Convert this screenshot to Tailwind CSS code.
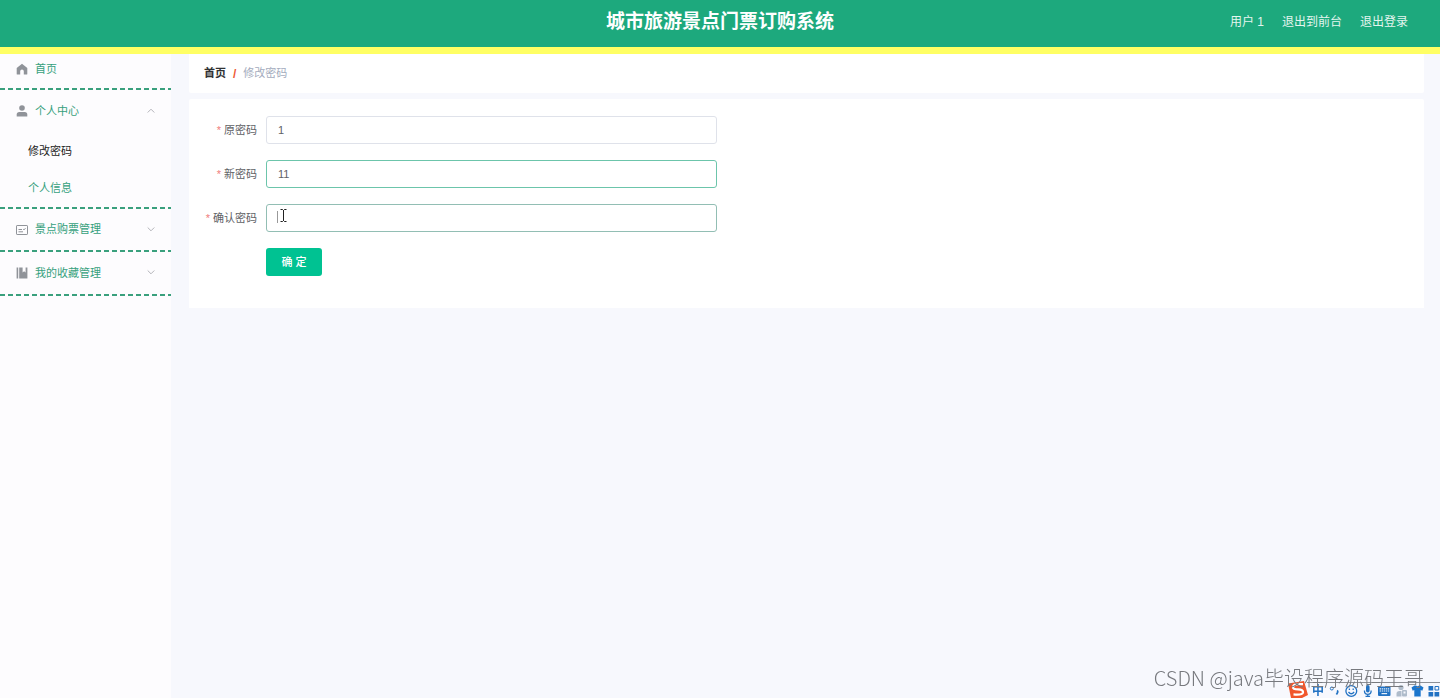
<!DOCTYPE html>
<html lang="zh-CN">

<head>
    <meta charset="UTF-8">
    <meta name="viewport" content="width=device-width, initial-scale=1.0">
    <script src="https://cdn.jsdelivr.net/npm/@tailwindcss/browser@4"></script>
    <title>城市旅游景点门票订购系统</title>
</head>

<body class="min-h-screen flex flex-col bg-[#f7f8fd] text-[11px] text-[#606266] font-['Liberation_Sans','Noto_Sans_CJK_SC',sans-serif]">
    <!-- Header -->
    <header class="grid grid-cols-[1fr_auto_1fr] items-center h-[54px] pb-1 px-8 bg-[#1da97d] border-b-[7px] border-[#ffff64]">
        <h1 class="col-start-2 text-[19px] leading-6 font-bold text-white">城市旅游景点门票订购系统</h1>
        <nav class="flex justify-end gap-[18px] text-[12px] text-[#e4f5ef]">
            <span>用户 1</span>
            <a href="#">退出到前台</a>
            <a href="#">退出登录</a>
        </nav>
    </header>

    <div class="flex flex-1">
        <!-- Sidebar -->
        <aside class="w-[171px] shrink-0 bg-[#fdfcfe] text-[#35a07c]">
            <a href="#" class="flex items-center h-[34px] pb-1 pl-4">
                <svg class="w-3 h-3 mr-[7px]" viewBox="0 0 12 12" fill="#909399">
                    <path d="M6 .8 11.3 5v6a.6.6 0 0 1-.6.6H7.800V8.200a1.800 1.800 0 0 0-3.600 0v3.400H1.300a.6.6 0 0 1-.6-.6V5z" />
                </svg>
                首页
            </a>
            <div class="h-[2px] bg-[repeating-linear-gradient(90deg,#3aa07d_0_5px,transparent_5px_8px)]"></div>

            <button type="button" aria-expanded="true" class="flex items-center w-full h-[42px] px-4">
                <svg class="w-3 h-3 mr-[7px]" viewBox="0 0 12 12" fill="#909399">
                    <circle cx="6" cy="3" r="2.800" />
                    <path d="M.7 11.500V9.600Q.7 7 3.300 7h5.400q2.600 0 2.600 2.600v1.900z" />
                </svg>
                个人中心
                <svg class="w-2 h-2 ml-auto" viewBox="0 0 8 8" fill="none" stroke="#b4b4ba" stroke-width="1">
                    <path d="M.7 5.500 4 2.200l3.300 3.300" />
                </svg>
            </button>
            <a href="#" class="flex items-center h-[38px] pl-7 text-[#1c1c1c]">修改密码</a>
            <a href="#" class="flex items-center h-[37px] pl-7">个人信息</a>
            <div class="h-[2px] bg-[repeating-linear-gradient(90deg,#3aa07d_0_5px,transparent_5px_8px)]"></div>

            <button type="button" aria-expanded="false" class="flex items-center w-full h-[41px] px-4">
                <svg class="w-3 h-3 mr-[7px]" viewBox="0 0 12 12" fill="none" stroke="#909399" stroke-width="1">
                    <rect x=".5" y="1.500" width="11" height="9" rx=".6" />
                    <path d="M2.500 5.500h3.500M2.500 7.800h4.500M7.200 5.200l.8.700 1.500-1.700" />
                </svg>
                景点购票管理
                <svg class="w-2 h-2 ml-auto" viewBox="0 0 8 8" fill="none" stroke="#b4b4ba" stroke-width="1">
                    <path d="M.7 1.500 4 4.800l3.300-3.300" />
                </svg>
            </button>
            <div class="h-[2px] bg-[repeating-linear-gradient(90deg,#3aa07d_0_5px,transparent_5px_8px)]"></div>

            <button type="button" aria-expanded="false" class="flex items-center w-full h-[42px] px-4">
                <svg class="w-3 h-3 mr-[7px]" viewBox="0 0 12 12" fill="#909399">
                    <path d="M.6.6h1.600v10.800H.6zM3.200.6h3.400v5l1.500-1.300 1.500 1.300v-5h1.800v10.800H3.200z" />
                </svg>
                我的收藏管理
                <svg class="w-2 h-2 ml-auto" viewBox="0 0 8 8" fill="none" stroke="#b4b4ba" stroke-width="1">
                    <path d="M.7 1.500 4 4.800l3.300-3.300" />
                </svg>
            </button>
            <div class="h-[2px] bg-[repeating-linear-gradient(90deg,#3aa07d_0_5px,transparent_5px_8px)]"></div>
        </aside>

        <!-- Content -->
        <main class="flex-1 ml-[18px] mr-4">
            <nav class="flex items-center h-[39px] px-[15px] bg-white rounded-b-xs">
                <a href="#" class="font-bold text-[#303133]">首页</a>
                <span class="mx-[7px] font-bold text-[12px] text-[#ee5a36]">/</span>
                <span class="text-[#a3abbd]">修改密码</span>
            </nav>

            <form class="flex flex-col gap-4 mt-[6px] pt-[17px] pb-8 bg-white rounded-t-xs">
                <div class="flex items-center">
                    <label for="oldPassword" class="w-[77px] pr-[9px] text-right"><span class="text-[#f07c7c]">*</span> 原密码</label>
                    <input type="text" id="oldPassword" value="1"
                        class="w-[451px] h-7 px-[11px] rounded-[3px] border border-[#dfe2ea] bg-white outline-none">
                </div>
                <div class="flex items-center">
                    <label for="newPassword" class="w-[77px] pr-[9px] text-right"><span class="text-[#f07c7c]">*</span> 新密码</label>
                    <input type="text" id="newPassword" value="11"
                        class="w-[451px] h-7 px-[11px] rounded-[3px] border border-[#6cc5ab] bg-white outline-none">
                </div>
                <div class="flex items-center">
                    <label for="confirmPassword" class="w-[77px] pr-[9px] text-right"><span class="text-[#f07c7c]">*</span> 确认密码</label>
                    <div class="relative">
                        <input type="text" id="confirmPassword"
                            class="block w-[451px] h-7 px-[11px] rounded-[3px] border border-[#92beb4] bg-white outline-none">
                        <!-- caret and pointer -->
                        <span class="absolute left-[11px] top-[7px] w-px h-3 bg-[#999]"></span>
                        <svg class="absolute left-[14px] top-[5px] w-[7px] h-[13px]" viewBox="0 0 7 13" fill="none" stroke="#222" stroke-width="1">
                            <path d="M.5.5h2.300M4.200.5h2.300M3.500 1v11M.5 12.500h2.300M4.200 12.500h2.300" />
                        </svg>
                    </div>
                </div>
                <button type="button" class="w-14 h-7 ml-[77px] rounded-[3px] bg-[#00c292] text-white font-medium">确 定</button>
            </form>
        </main>
    </div>

    <!-- Input method bar -->
    <div class="fixed right-0 bottom-0 w-[153px] h-[18px]">
        <div class="absolute left-5 right-0 top-[2px] h-px bg-[#8d9096]"></div>
        <svg class="absolute left-0 top-0 w-[153px] h-[18px]" viewBox="0 0 153 18" fill="none">
            <path d="M1 3.500 17 1l4 14-6 3H4z" fill="#f1562b" />
            <path d="M16 4.200Q6 3.500 6 7.200q0 2.200 5 2.200 5.500.2 5 3-.6 2.800-9.500 2" stroke="#fff" stroke-width="2.200" />
            <g stroke="#2272c3" stroke-width="1.300">
                <circle cx="44.800" cy="8.500" r="1.500" stroke-width="1" />
                <path d="M50 10.500q1.800.8-.6 4" stroke-width="1.800" />
                <circle cx="64.300" cy="11" r="5.400" />
                <path d="M61.500 12q2.800 3.500 5.600 0" />
                <path d="M62.400 8.500v1.500M66.200 8.500v1.500" />
                <path d="M77.500 10.500v.8q0 3 3.300 3t3.300-3v-.8M80.800 14v2.500M78.500 16.400h4.600" />
            </g>
            <rect x="79" y="5" width="3.600" height="7.500" rx="1.800" fill="#2272c3" />
            <rect x="91" y="6.500" width="12.500" height="9.500" rx="1" fill="#2272c3" />
            <path d="M92.600 8.800h9.600M92.600 11h9.600" stroke="#e6effa" stroke-width="1.200" stroke-dasharray="1.400 .7" />
            <path d="M94.500 13.600h5.600" stroke="#e6effa" stroke-width="1.200" />
            <g fill="#afbccb">
                <circle cx="114" cy="7.500" r="2.600" />
                <path d="M109.500 16.500v-3q0-2.500 3-2.500h2v5.500z" />
                <rect x="115" y="10" width="5" height="6.500" rx="1" />
                <path d="M116.500 11.500h2v2h-2z" fill="#f7f8fd" />
            </g>
            <path d="m127.500 5.500-3 2 1.200 3.200 1.600-.6v6.400h6.400v-6.400l1.600.6 1.200-3.200-3-2h-1.500q-1.500 1.500-3 0z" fill="#1c76cd" />
            <path d="M141.500 6h4.700v4.500h-4.700zM141.500 12h4.700v4.500h-4.700zM147.500 12h4.700v4.500h-4.700z" fill="#2272c3" />
            <path d="M148 6.500h3.700v3.500H148z" stroke="#2272c3" />
        </svg>
        <span class="absolute left-[25px] top-1 text-[12px] leading-[14px] font-bold text-[#2272c3]">中</span>
    </div>

    <!-- Watermark -->
    <p class="fixed right-4 bottom-2 text-[20px] leading-6 whitespace-nowrap font-light text-[#77797e] font-['Noto_Sans_CJK_SC',sans-serif]">CSDN @java毕设程序源码王哥</p>
</body>

</html>
